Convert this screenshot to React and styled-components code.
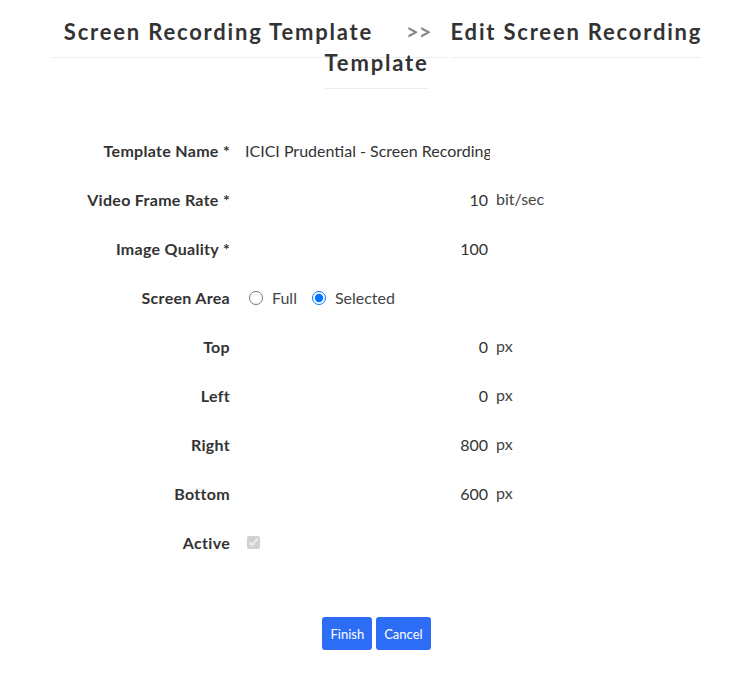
import React, { useState } from 'react';
import styled, { createGlobalStyle } from 'styled-components';

const GlobalStyle = createGlobalStyle`
  body {
    margin: 0;
    background: #fff;
    font-family: Lato, 'Open Sans', 'Liberation Sans', sans-serif;
    color: #333;
  }
`;

const FIELDS = [
  { name: 'frameRate', label: 'Video Frame Rate', required: true, value: '10', unit: 'bit/sec' },
  { name: 'quality', label: 'Image Quality', required: true, value: '100' },
];

const AREA_FIELDS = [
  { name: 'top', label: 'Top', value: '0', unit: 'px' },
  { name: 'left', label: 'Left', value: '0', unit: 'px' },
  { name: 'right', label: 'Right', value: '800', unit: 'px' },
  { name: 'bottom', label: 'Bottom', value: '600', unit: 'px' },
];

const App = () => {
  const [area, setArea] = useState('selected');
  const [name, setName] = useState('ICICI Prudential - Screen Recording');

  return (
    <>
      <GlobalStyle />
      <Page>
        <Heading>
          <Crumb>Screen Recording Template</Crumb>
          <Separator>&gt;&gt;</Separator>
          <Current gap>Edit Screen Recording</Current>{' '}
          <Current>Template</Current>
        </Heading>

        <Form onSubmit={e => e.preventDefault()}>
          <Row>
            <Label>Template Name *</Label>
            <TextInput value={name} onChange={e => setName(e.target.value)} />
          </Row>
          {FIELDS.map(field => (
            <Row key={field.name}>
              <Label>
                {field.label}
                {field.required && ' *'}
              </Label>
              <TextInput defaultValue={field.value} alignRight />
              {field.unit && <Unit>{field.unit}</Unit>}
            </Row>
          ))}
          <Row>
            <Label>Screen Area</Label>
            <RadioGroup>
              <RadioOption>
                <input
                  type="radio"
                  name="area"
                  checked={area === 'full'}
                  onChange={() => setArea('full')}
                />
                Full
              </RadioOption>
              <RadioOption>
                <input
                  type="radio"
                  name="area"
                  checked={area === 'selected'}
                  onChange={() => setArea('selected')}
                />
                Selected
              </RadioOption>
            </RadioGroup>
          </Row>
          {AREA_FIELDS.map(field => (
            <Row key={field.name}>
              <Label>{field.label}</Label>
              <TextInput defaultValue={field.value} alignRight />
              <Unit>{field.unit}</Unit>
            </Row>
          ))}
          <Row>
            <Label>Active</Label>
            <CheckCell>
              <input type="checkbox" checked disabled readOnly />
            </CheckCell>
          </Row>
        </Form>

        <Actions>
          <Button type="button">Finish</Button>
          <Button type="button">Cancel</Button>
        </Actions>
      </Page>
    </>
  );
};

export default App;

const Page = styled.div`
  padding: 16px 0 0 10px;
`;

const Heading = styled.h2`
  margin: 0;
  text-align: center;
  font-size: 22px;
  line-height: 31px;
  font-weight: 700;
  letter-spacing: 1.8px;
  color: #333;
`;

const Crumb = styled.span`
  padding: 0 0 12px 13px;
  border-bottom: 1px solid #eee;
`;

const Separator = styled.span`
  padding: 0 16px 12px 33px;
  border-bottom: 1px solid #eee;
  color: #888;
  letter-spacing: 0;
`;

const Current = styled.span`
  margin-left: ${props => (props.gap ? '3px' : '0')};
  padding-bottom: 12px;
  border-bottom: 1px solid #eee;
`;

const Form = styled.form`
  margin-top: 48px;
  display: grid;
  grid-template-columns: 220px 245px 1fr;
  grid-auto-rows: 49px;
  column-gap: 15px;
`;

const Row = styled.div`
  display: contents;
`;

const Label = styled.label`
  grid-column: 1;
  align-self: center;
  text-align: right;
  font-size: 16px;
  letter-spacing: 0.3px;
  font-weight: 700;
  color: #333;
`;

const TextInput = styled.input`
  grid-column: 2;
  align-self: center;
  width: 100%;
  box-sizing: border-box;
  border: none;
  outline: none;
  padding: 0 ${props => (props.alignRight ? '2px' : '0')} 0 0;
  font-family: inherit;
  font-size: 16px;
  color: #333;
  background: transparent;
  text-align: ${props => (props.alignRight ? 'right' : 'left')};
`;

const Unit = styled.span`
  grid-column: 3;
  align-self: center;
  margin: -3px 0 0 -9px;
  font-size: 16px;
  color: #444;
`;

const RadioGroup = styled.div`
  grid-column: 2;
  align-self: center;
  display: flex;
  align-items: center;
  gap: 15px;
  margin-left: 4px;
`;

const RadioOption = styled.label`
  display: flex;
  align-items: center;
  gap: 9px;
  font-size: 16px;
  color: #444;

  input {
    margin: 0;
    width: 14px;
    height: 14px;
  }
`;

const CheckCell = styled.div`
  grid-column: 2;
  align-self: center;
  display: flex;
  margin-left: 2px;

  input {
    margin: 0;
    width: 13px;
    height: 13px;
  }
`;

const Actions = styled.div`
  display: flex;
  justify-content: center;
  gap: 4px;
  margin-top: 50px;
`;

const Button = styled.button`
  height: 33px;
  padding: 0 8px;
  border: none;
  border-radius: 3px;
  background-color: #2d6df6;
  color: #fff;
  font-family: inherit;
  font-size: 13px;
  cursor: pointer;
`;
